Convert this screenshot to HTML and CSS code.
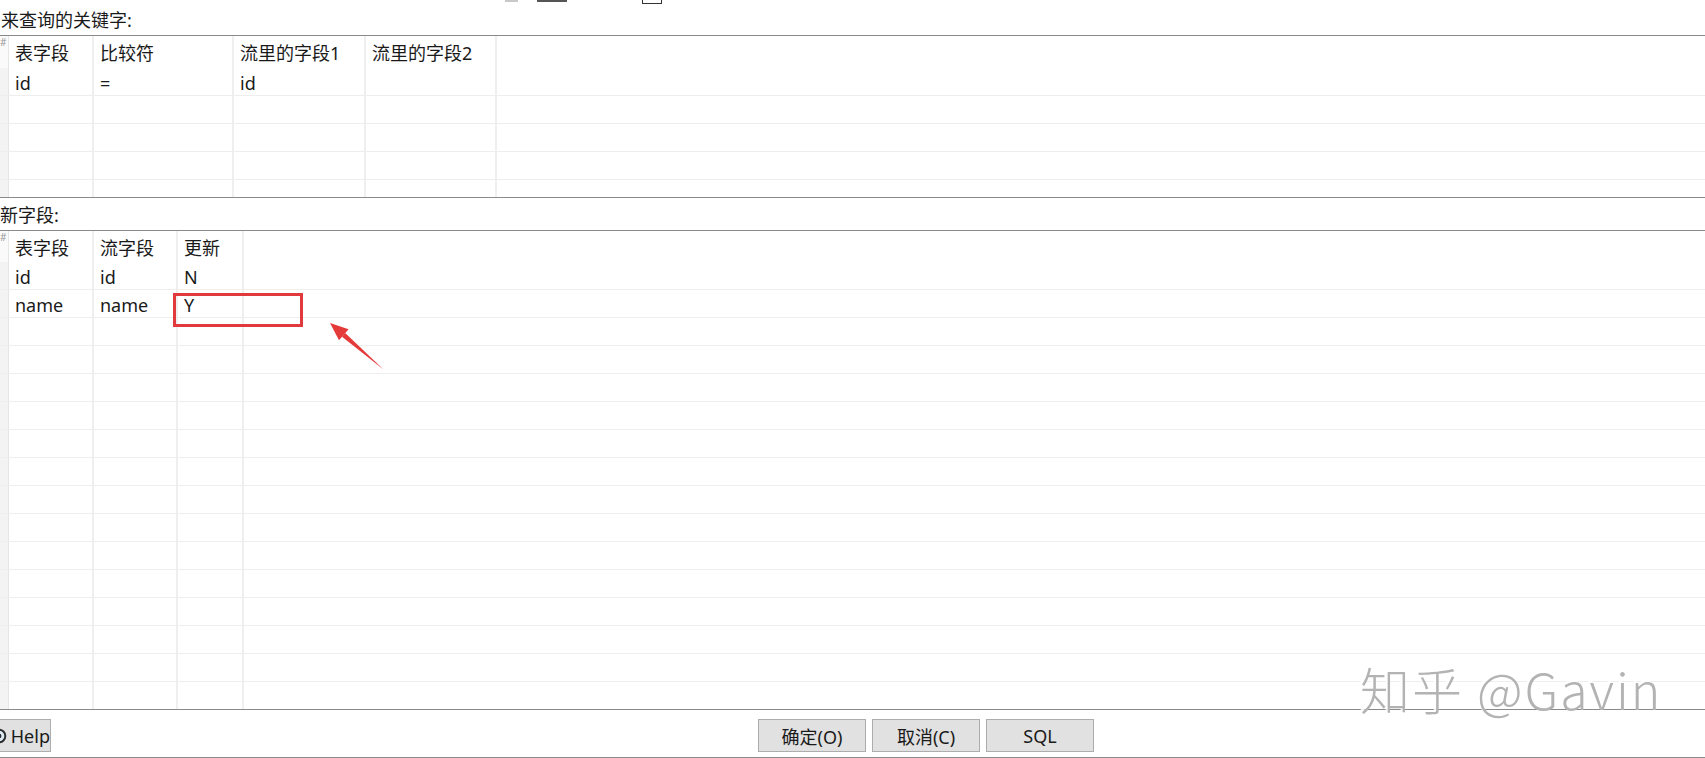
FILE: index.html
```html
<!DOCTYPE html>
<html lang="zh-CN">
<head>
  <meta charset="UTF-8">
  <title>插入 / 更新</title>
  <link rel="stylesheet" href="styles.css">
</head>
<body>
  <div class="crumbs">
    <span class="bit bit-gray"></span>
    <span class="bit bit-dark"></span>
    <span class="bit bit-box"></span>
  </div>
  <div class="label label-top">来查询的关键字:</div>

  <div class="grid grid-keys">
    <div class="row head">
      <div class="cell ind">#</div>
      <div class="cell">表字段</div>
      <div class="cell">比较符</div>
      <div class="cell">流里的字段1</div>
      <div class="cell">流里的字段2</div>
      <div class="cell last"></div>
    </div>
    <div class="row">
      <div class="cell ind"></div>
      <div class="cell">id</div>
      <div class="cell">=</div>
      <div class="cell">id</div>
      <div class="cell"></div>
      <div class="cell last"></div>
    </div>
    <div class="row"><div class="cell ind"></div><div class="cell"></div><div class="cell"></div><div class="cell"></div><div class="cell"></div><div class="cell last"></div></div>
    <div class="row"><div class="cell ind"></div><div class="cell"></div><div class="cell"></div><div class="cell"></div><div class="cell"></div><div class="cell last"></div></div>
    <div class="row"><div class="cell ind"></div><div class="cell"></div><div class="cell"></div><div class="cell"></div><div class="cell"></div><div class="cell last"></div></div>
    <div class="row"><div class="cell ind"></div><div class="cell"></div><div class="cell"></div><div class="cell"></div><div class="cell"></div><div class="cell last"></div></div>
  </div>

  <div class="label label-mid">新字段:</div>

  <div class="grid grid-fields" id="fields">
    <div class="row head">
      <div class="cell ind">#</div>
      <div class="cell">表字段</div>
      <div class="cell">流字段</div>
      <div class="cell">更新</div>
      <div class="cell last"></div>
    </div>
    <div class="row">
      <div class="cell ind"></div>
      <div class="cell">id</div>
      <div class="cell">id</div>
      <div class="cell">N</div>
      <div class="cell last"></div>
    </div>
    <div class="row">
      <div class="cell ind"></div>
      <div class="cell">name</div>
      <div class="cell">name</div>
      <div class="cell">Y</div>
      <div class="cell last"></div>
    </div>
  </div>

  <div class="bar">
    <button class="btn btn-help">
      <svg class="help-icon" width="8" height="16" viewBox="0 0 8 16">
        <circle cx="0" cy="8" r="6.5" fill="#dbe9f5" stroke="#2b2b2b" stroke-width="2"/>
        <circle cx="0" cy="8" r="2.5" fill="#2b2b2b"/>
      </svg>
      Help
    </button>
    <div class="actions">
      <button class="btn">确定(O)</button>
      <button class="btn">取消(C)</button>
      <button class="btn">SQL</button>
    </div>
  </div>

  <div class="mark-box"></div>
  <svg class="mark-arrow" width="75" height="65" viewBox="0 0 75 65">
    <polygon points="63.5,54.5 25.2,17.9 22.0,21.7" fill="#e53a3a"/>
    <polygon points="10,8 28.6,14.3 19.0,25.3" fill="#e53a3a"/>
  </svg>

  <div class="watermark">知乎 @Gavin</div>

  <script>
    // pad the lower grid with empty rows
    const fields = document.getElementById("fields");
    for (let i = 0; i < 14; i++) {
      const row = document.createElement("div");
      row.className = "row";
      row.innerHTML = '<div class="cell ind"></div><div class="cell"></div><div class="cell"></div><div class="cell"></div><div class="cell last"></div>';
      fields.appendChild(row);
    }
  </script>
</body>
</html>
```

FILE: styles.css
```css
* {
  box-sizing: border-box;
}

body {
  margin: 0;
  padding: 0;
  background-color: #fff;
  color: #1a1a1a;
  font-family: "Noto Sans", "Noto Sans CJK SC", sans-serif;
  font-size: 18px;
  width: 1705px;
  height: 758px;
  overflow: hidden;
  position: relative;
}

.crumbs {
  height: 5px;
  display: flex;
  align-items: flex-start;
  overflow: hidden;
}

.bit {
  display: block;
  height: 2px;
}

.bit-gray {
  width: 13px;
  margin-left: 505px;
  background-color: #c8c8c8;
}

.bit-dark {
  width: 30px;
  margin-left: 19px;
  background-color: #555;
}

.bit-box {
  width: 20px;
  height: 4px;
  margin-left: 75px;
  border: 1px solid #333;
  border-top: none;
}

.label {
  line-height: 30px;
  white-space: nowrap;
}

.label-top {
  height: 31px;
  padding-left: 1px;
  border-bottom: 1px solid #8a8a8a;
}

.label-mid {
  height: 34px;
  padding-top: 2px;
  border-top: 1px solid #8a8a8a;
  border-bottom: 1px solid #8a8a8a;
}

.grid {
  overflow: hidden;
}

.grid-keys {
  height: 161px;
}

.grid-fields {
  height: 478px;
}

.row {
  display: grid;
  height: 28px;
  border-bottom: 1px solid #eeeeee;
}

.grid-keys .row {
  grid-template-columns: 9px 85px 140px 132px 131px 1fr;
}

.grid-fields .row {
  grid-template-columns: 9px 85px 84px 66px 1fr;
}

.row.head {
  height: 32px;
  border-bottom: none;
}

.grid-fields .row.head {
  height: 31px;
}

.cell {
  padding-left: 6px;
  padding-top: 1px;
  line-height: 28px;
  white-space: nowrap;
  overflow: hidden;
  border-right: 2px solid #efefef;
}

.head .cell {
  padding-top: 2px;
  line-height: 30px;
}

.cell.last {
  border-right: none;
}

.cell.ind {
  padding: 0;
  font-size: 10px;
  line-height: 12px;
  color: #9a9a9a;
  background-color: #f3f3f3;
  border-right: 1px solid #e6e6e6;
}

.head .cell.ind {
  padding: 0;
  line-height: 12px;
  background-color: #fafafa;
}

.bar {
  height: 49px;
  border-top: 1px solid #8a8a8a;
  border-bottom: 1px solid #8a8a8a;
  padding-top: 9px;
  display: flex;
  align-items: flex-start;
}

.btn {
  height: 33px;
  width: 108px;
  padding: 0;
  font-family: "Noto Sans", "Noto Sans CJK SC", sans-serif;
  font-size: 18px;
  color: #1a1a1a;
  background-color: #e1e1e1;
  border: 1px solid #adadad;
  border-radius: 0;
}

.btn-help {
  width: 53px;
  margin-left: -2px;
  display: flex;
  align-items: center;
  gap: 4px;
  padding-left: 0;
}

.help-icon {
  display: block;
}

.actions {
  display: flex;
  gap: 6px;
  margin-left: 707px;
}

.mark-box {
  position: absolute;
  left: 173px;
  top: 293px;
  width: 130px;
  height: 34px;
  border: 3px solid #e0393e;
}

.mark-arrow {
  position: absolute;
  left: 320px;
  top: 315px;
}

.watermark {
  position: absolute;
  left: 1360px;
  top: 660px;
  font-family: "Noto Sans CJK SC", sans-serif;
  font-size: 50px;
  font-weight: 300;
  line-height: 56px;
  letter-spacing: 2px;
  color: #b3b3b3;
  white-space: nowrap;
  text-shadow: -2px -2px 0 rgba(255, 255, 255, 0.85);
}
```
